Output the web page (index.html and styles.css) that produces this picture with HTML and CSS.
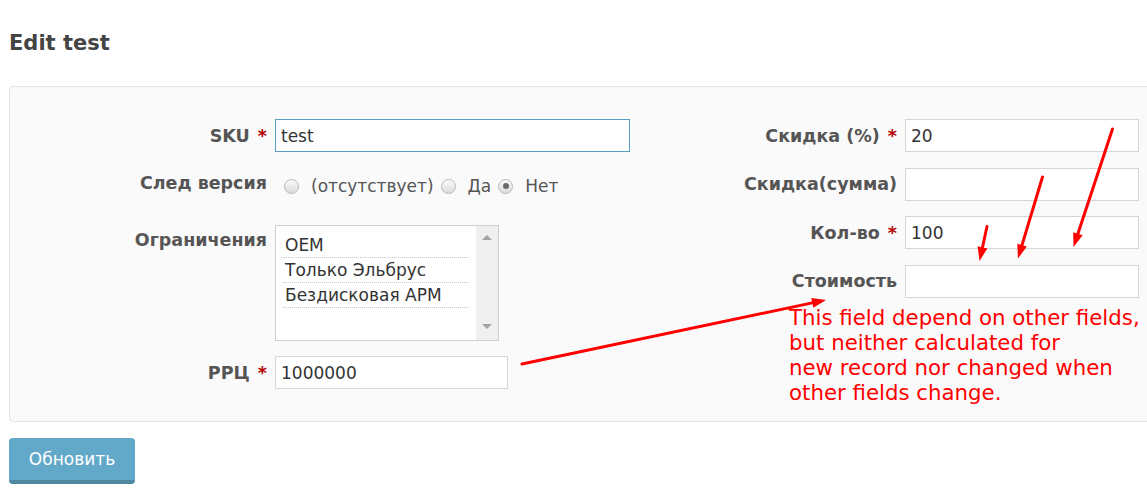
FILE: index.html
```html
<!DOCTYPE html>
<html>
<head>
<meta charset="utf-8">
<title>Edit test</title>
<link rel="stylesheet" href="styles.css">
</head>
<body>
<h1 class="title">Edit test</h1>
<div class="panel">
  <div class="col col-left">
    <div class="row">
      <label class="lbl">SKU <span class="req">*</span></label>
      <input class="field field-sku" type="text" value="test">
    </div>
    <div class="row row-radio">
      <label class="lbl lbl-top">След версия</label>
      <div class="radios">
        <span class="radio"></span><span class="rtext">(отсутствует)</span>
        <span class="radio"></span><span class="rtext">Да</span>
        <span class="radio radio-on"></span><span class="rtext">Нет</span>
      </div>
    </div>
    <div class="row row-select">
      <label class="lbl lbl-sel">Ограничения</label>
      <div class="multi">
        <ul class="opts">
          <li class="opt">OEM</li>
          <li class="opt">Только Эльбрус</li>
          <li class="opt">Бездисковая АРМ</li>
        </ul>
        <div class="sb"><span class="tri-up"></span><span class="tri-down"></span></div>
      </div>
    </div>
    <div class="row">
      <label class="lbl">РРЦ <span class="req">*</span></label>
      <input class="field field-rrc" type="text" value="1000000">
    </div>
  </div>
  <div class="col col-right">
    <div class="rows">
      <div class="row">
        <label class="lbl">Скидка (%) <span class="req">*</span></label>
        <input class="field" type="text" value="20">
      </div>
      <div class="row">
        <label class="lbl">Скидка(сумма)</label>
        <input class="field" type="text" value="">
      </div>
      <div class="row">
        <label class="lbl">Кол-во <span class="req">*</span></label>
        <input class="field" type="text" value="100">
      </div>
      <div class="row">
        <label class="lbl">Стоимость</label>
        <input class="field" type="text" value="">
      </div>
    </div>
    <p class="note">This field depend on other fields,<br>but neither calculated for<br>new record nor changed when<br>other fields change.</p>
  </div>
</div>
<button class="btn" type="button">Обновить</button>

<svg class="arrows" viewBox="0 0 1147 498" width="1147" height="498" xmlns="http://www.w3.org/2000/svg">
  <g stroke="#ff0000" stroke-width="3" stroke-linecap="round" fill="none">
    <line x1="522" y1="364" x2="812.3" y2="302.9"/>
    <line x1="987" y1="226.5" x2="982.5" y2="247.3"/>
    <line x1="1042.5" y1="177" x2="1022" y2="245.1"/>
    <line x1="1112.5" y1="129" x2="1077.9" y2="233.7"/>
  </g>
  <g fill="#ff0000">
    <polygon points="826,300 813.33,307.77 811.27,297.99"/>
    <polygon points="979.5,261 987.36,248.38 977.59,246.26"/>
    <polygon points="1018,258.5 1026.82,246.53 1017.24,243.65"/>
    <polygon points="1073.5,247 1082.64,235.28 1073.14,232.14"/>
  </g>
</svg>
</body>
</html>
```
FILE: styles.css
```css
html, body {
  margin: 0;
  overflow: hidden;
  background: #fff;
}
body {
  position: relative;
  width: 1147px;
  height: 498px;
  box-sizing: border-box;
  padding: 0 0 0 9px;
  font-family: "DejaVu Sans", Verdana, sans-serif;
  color: #555;
}
.title {
  margin: 31px 0 31px;
  font-size: 21px;
  line-height: 24px;
  font-weight: bold;
  color: #444;
}
.panel {
  width: 1160px;
  height: 336px;
  box-sizing: border-box;
  border: 1px solid #e3e3e3;
  border-radius: 4px;
  background: #fafafa;
  display: flex;
  padding-top: 32px;
}
.col-left {
  width: 681px;
  display: flex;
  flex-direction: column;
  gap: 15px;
}
.row {
  display: grid;
  grid-template-columns: 257px auto;
  column-gap: 8px;
  align-items: center;
  justify-items: start;
}
.lbl {
  justify-self: end;
  text-align: right;
  font-weight: bold;
  font-size: 17.5px;
  line-height: 20px;
  color: #555;
  white-space: nowrap;
}
.req { color: #b30000; margin-left: 2px; }
.field {
  box-sizing: border-box;
  height: 33px;
  margin: 0;
  padding: 0 5px;
  border: 1px solid #d6d6d6;
  background: #fff;
  font-family: "DejaVu Sans", Verdana, sans-serif;
  font-size: 17px;
  color: #333;
  outline: none;
}
.field-sku { width: 355px; border-color: #5b9ec3; }
.field-rrc { width: 233px; }

.row-radio { height: 43px; align-items: start; }
.lbl-top { padding-top: 6px; }
.radios {
  padding-top: 9px;
  display: flex;
  align-items: center;
  font-size: 17px;
  line-height: 20px;
  color: #555;
  margin-left: 9px;
}
.radio {
  width: 15px;
  height: 15px;
  box-sizing: border-box;
  border-radius: 50%;
  border: 1px solid #b8b8b8;
  background: linear-gradient(#fbfbfb, #dadada);
  display: flex;
  align-items: center;
  justify-content: center;
}
.radio-on::after {
  content: "";
  width: 6px;
  height: 6px;
  border-radius: 50%;
  background: #6a6a6a;
}
.rtext { margin: 0 7px 0 12px; }

.row-select { align-items: start; }
.lbl-sel { padding-top: 5px; }
.multi {
  width: 224px;
  height: 116px;
  box-sizing: border-box;
  border: 1px solid #cfcfcf;
  background: #fff;
  display: flex;
}
.opts {
  flex: 1;
  list-style: none;
  margin: 0;
  padding: 7px 0 0 7px;
}
.opt {
  width: 186px;
  height: 25px;
  box-sizing: border-box;
  padding-left: 2px;
  border-bottom: 1px dotted #c8c8c8;
  font-size: 17px;
  line-height: 24px;
  color: #333;
  white-space: nowrap;
}
.sb {
  width: 22px;
  background: #efefef;
  display: flex;
  flex-direction: column;
  align-items: center;
  justify-content: space-between;
  padding: 9px 0 11px;
  box-sizing: border-box;
}
.tri-up {
  width: 0; height: 0;
  border-left: 5px solid transparent;
  border-right: 5px solid transparent;
  border-bottom: 5px solid #a3a3a3;
}
.tri-down {
  width: 0; height: 0;
  border-left: 5px solid transparent;
  border-right: 5px solid transparent;
  border-top: 5px solid #a3a3a3;
}

.col-right {
  width: 460px;
}
.rows {
  display: flex;
  flex-direction: column;
  gap: 15.5px;
}
.col-right .row { grid-template-columns: 206px 234px; }
.col-right .field { width: 234px; }
.note {
  margin: 7px 0 0 98px;
  font-size: 21.3px;
  line-height: 25px;
  color: #ff0000;
  white-space: nowrap;
}
.btn {
  display: block;
  margin: 16px 0 0;
  width: 126px;
  height: 46px;
  box-sizing: border-box;
  padding: 0;
  border: 0;
  border-bottom: 4px solid #4f889f;
  border-radius: 4px;
  background: #62a8c9;
  color: #fff;
  font-family: "DejaVu Sans", Verdana, sans-serif;
  font-size: 17px;
}
.arrows {
  position: absolute;
  left: 0;
  top: 0;
  pointer-events: none;
}
```
